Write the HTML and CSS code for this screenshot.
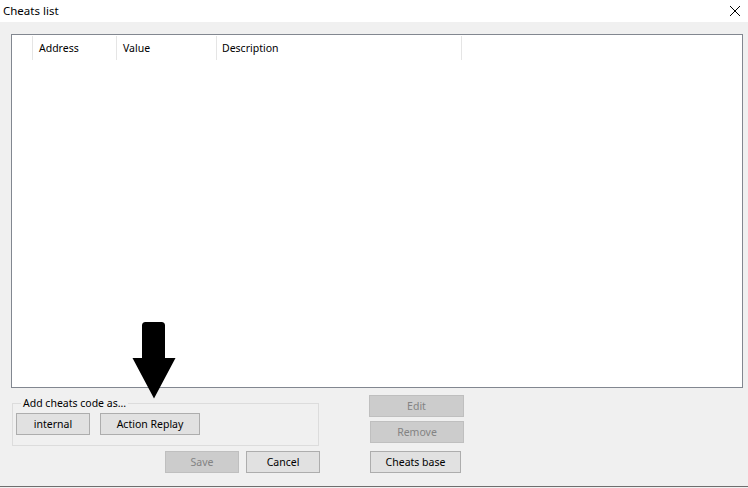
FILE: index.html
```html
<!DOCTYPE html>
<html>
<head>
<meta charset="utf-8">
<link rel="stylesheet" href="styles.css">
</head>
<body>
<div class="window">
  <div class="titlebar">
    <span class="title">Cheats list</span>
    <svg class="close" width="12" height="12" viewBox="0 0 12 12"><path d="M1 1 L11 11 M11 1 L1 11" stroke="#000" stroke-width="1" fill="none"/></svg>
  </div>
  <div class="content">
    <div class="list">
      <div class="list-header">
        <div class="col col-check"></div>
        <div class="col col-address">Address</div>
        <div class="col col-value">Value</div>
        <div class="col col-desc">Description</div>
      </div>
    </div>
    <div class="bottom">
      <div class="left">
        <fieldset class="group">
          <legend>Add cheats code as...</legend>
          <div class="group-row">
            <button class="btn btn-internal">internal</button>
            <button class="btn btn-ar">Action Replay</button>
          </div>
        </fieldset>
        <div class="actions">
          <button class="btn btn-save" disabled>Save</button>
          <button class="btn btn-cancel">Cancel</button>
        </div>
      </div>
      <div class="right">
        <button class="btn btn-edit" disabled>Edit</button>
        <button class="btn btn-remove" disabled>Remove</button>
        <button class="btn btn-base">Cheats base</button>
      </div>
    </div>
  </div>
  <svg class="arrow" width="50" height="84" viewBox="130 318 50 84">
    <path d="M142 358 V325.5 Q142 322 145.5 322 H161.5 Q165 322 165 325.5 V358 H175.5 L154 398.5 L132.5 358 Z" fill="#000"/>
  </svg>
</div>
</body>
</html>
```

FILE: styles.css
```css
* { box-sizing: border-box; }
html, body {
  margin: 0;
  padding: 0;
  background: #f0f0f0;
}
body {
  font-family: "Noto Sans", "Open Sans", sans-serif;
  font-size: 10.5px;
  color: #000;
}
.window {
  position: relative;
  width: 748px;
  height: 487px;
  background: #f0f0f0;
  border-bottom: 1px solid #6e6e6e;
}
.titlebar {
  height: 22px;
  background: #ffffff;
  display: flex;
  align-items: center;
  justify-content: space-between;
  padding: 0 7px 0 3px;
}
.title {
  font-size: 11.5px;
  line-height: 22px;
}
.close {
  display: block;
  margin-top: -1px;
}
.content {
  padding: 12px 5px 0 11px;
}
.list {
  height: 354px;
  background: #ffffff;
  border: 1px solid #828790;
}
.list-header {
  display: flex;
  padding-top: 1px;
  height: 25px;
}
.col {
  height: 24px;
  line-height: 24px;
  border-right: 1px solid #e5e5e5;
  padding-left: 6px;
  white-space: nowrap;
}
.col-check { width: 21px; }
.col-address { width: 84px; }
.col-value { width: 100px; }
.col-desc { width: 245px; padding-left: 5px; }
.bottom {
  display: flex;
  align-items: flex-start;
}
.left {
  width: 308px;
  margin-left: 1px;
}
.group {
  margin: 7px 0 0 0;
  width: 307px;
  border: 1px solid #dcdcdc;
  padding: 2px 0 10px 3px;
}
.group legend {
  margin-left: 5px;
  padding: 0 2px;
  line-height: 16px;
  height: 16px;
}
.group-row {
  display: flex;
  gap: 10px;
}
.btn {
  height: 22px;
  padding: 0;
  margin: 0;
  font-family: inherit;
  font-size: 10.5px;
  color: #000;
  background: #e1e1e1;
  border: 1px solid #adadad;
  border-radius: 0;
}
.btn:disabled {
  background: #cccccc;
  border-color: #bfbfbf;
  color: #838383;
}
.btn-internal { width: 74px; }
.btn-ar { width: 100px; }
.actions {
  display: flex;
  gap: 7px;
  margin-top: 5px;
  padding-left: 153px;
}
.btn-save, .btn-cancel { width: 74px; }
.right {
  display: flex;
  flex-direction: column;
  align-items: flex-start;
  margin-left: 49px;
  margin-top: 7px;
}
.btn-edit { width: 95px; }
.btn-remove { width: 94px; margin-left: 1px; margin-top: 4px; }
.btn-base { width: 91px; margin-left: 1px; margin-top: 8px; }
.arrow {
  position: absolute;
  left: 130px;
  top: 318px;
}
```
